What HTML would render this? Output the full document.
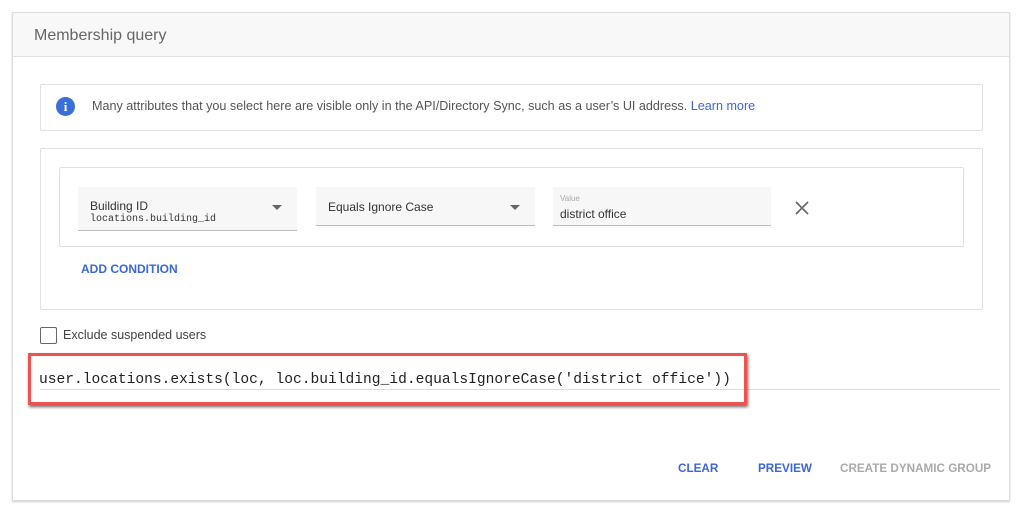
<!DOCTYPE html>
<html><head><style>
body{margin:0;width:1024px;height:517px;background:#fff;font-family:"Liberation Sans",sans-serif;position:relative;overflow:hidden}
.a{position:absolute}
.card{left:12px;top:12px;width:996px;height:487px;border:1px solid #ddd;box-shadow:0 1px 2px rgba(0,0,0,.2);background:#fff}
.hdr{left:12px;top:12px;width:996px;height:43px;background:#f8f8f8;border:1px solid #ddd;border-bottom:1px solid #e2e2e2}
.box{border:1px solid #e0e0e0;border-radius:2px;background:#fff}
.fld{background:#f7f7f7;border-bottom:1px solid #bdbdbd}
.tri{width:0;height:0;border-left:5px solid transparent;border-right:5px solid transparent;border-top:5px solid #666}
.btn{font-size:11.7px;font-weight:bold;color:#3b67d8;top:462px}
</style></head><body>
<div class="a card"></div>
<div class="a hdr"></div>
<div class="a" style="left:34px;top:27px;font-size:16px;color:#666">Membership query</div>
<div class="a box" style="left:40px;top:84px;width:941px;height:45px"></div>
<div class="a" style="left:56px;top:97px;width:19px;height:19px;border-radius:50%;background:#3b6fd8;color:#fff;font-size:13px;font-weight:bold;text-align:center;line-height:19px;font-family:'Liberation Serif',serif">i</div>
<div class="a" style="left:92px;top:99px;font-size:12.6px;color:#555">Many attributes that you select here are visible only in the API/Directory Sync, such as a user’s UI address. <span style="color:#3b67d8">Learn more</span></div>
<div class="a box" style="left:40px;top:148px;width:941px;height:160px"></div>
<div class="a box" style="left:59px;top:167px;width:903px;height:78px"></div>
<div class="a fld" style="left:78px;top:187px;width:219px;height:43px"></div>
<div class="a" style="left:90px;top:199px;font-size:12px;color:#333">Building ID</div>
<div class="a" style="left:90px;top:214px;font-size:10px;color:#333;font-family:'Liberation Mono',monospace">locations.building_id</div>
<div class="a tri" style="left:272px;top:205px"></div>
<div class="a fld" style="left:316px;top:187px;width:219px;height:38px"></div>
<div class="a" style="left:328px;top:200px;font-size:12px;color:#333">Equals Ignore Case</div>
<div class="a tri" style="left:510px;top:205px"></div>
<div class="a fld" style="left:553px;top:187px;width:218px;height:38px"></div>
<div class="a" style="left:560px;top:194px;font-size:8px;color:#aaa">Value</div>
<div class="a" style="left:560px;top:207px;font-size:12px;color:#333">district office</div>
<svg class="a" style="left:795px;top:201px" width="14" height="14"><path d="M1 1L13 13M13 1L1 13" stroke="#666" stroke-width="1.6"/></svg>
<div class="a" style="left:81px;top:262px;font-size:12px;font-weight:bold;color:#3b67d8">ADD CONDITION</div>
<div class="a" style="left:40px;top:327px;width:15px;height:15px;border:1.5px solid #666;border-radius:2px"></div>
<div class="a" style="left:63px;top:328px;font-size:12.5px;color:#444">Exclude suspended users</div>
<div class="a" style="left:40px;top:389px;width:960px;height:1px;background:#ddd"></div>
<div class="a" style="left:28px;top:353px;width:713px;height:46px;border:3px solid #ef5350;box-shadow:1px 2px 3px rgba(0,0,0,.6)"></div>
<div class="a" style="left:39px;top:372px;font-size:14.6px;color:#222;font-family:'Liberation Mono',monospace">user.locations.exists(loc, loc.building_id.equalsIgnoreCase('district office'))</div>
<div class="a btn" style="left:678px">CLEAR</div>
<div class="a btn" style="left:758px">PREVIEW</div>
<div class="a btn" style="left:840px;color:#aaa">CREATE DYNAMIC GROUP</div>
</body></html>
